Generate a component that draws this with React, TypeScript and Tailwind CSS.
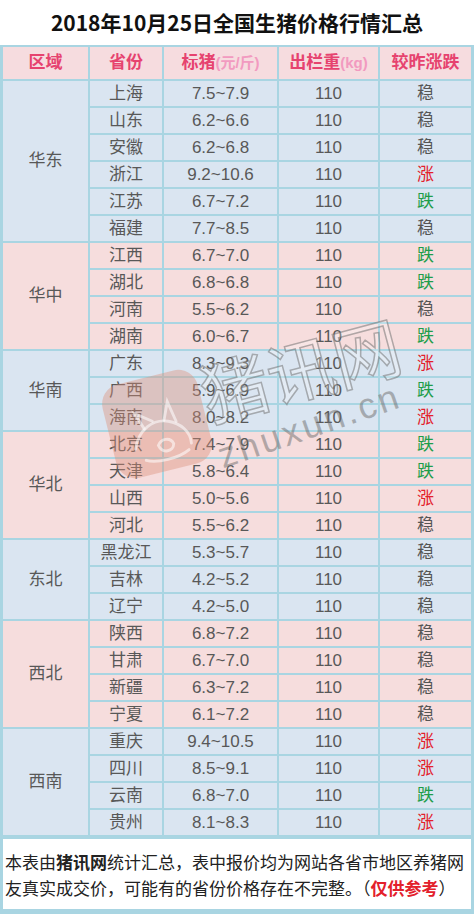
import React from 'react';

type Trend = '稳' | '涨' | '跌';
type Row = [string, string, Trend];
type Region = { name: string; tone: 'blue' | 'pink'; rows: Row[] };

const regions: Region[] = [
  {
    name: '华东',
    tone: 'blue',
    rows: [
      ['上海', '7.5~7.9', '稳'],
      ['山东', '6.2~6.6', '稳'],
      ['安徽', '6.2~6.8', '稳'],
      ['浙江', '9.2~10.6', '涨'],
      ['江苏', '6.7~7.2', '跌'],
      ['福建', '7.7~8.5', '稳'],
    ],
  },
  {
    name: '华中',
    tone: 'pink',
    rows: [
      ['江西', '6.7~7.0', '跌'],
      ['湖北', '6.8~6.8', '跌'],
      ['河南', '5.5~6.2', '稳'],
      ['湖南', '6.0~6.7', '跌'],
    ],
  },
  {
    name: '华南',
    tone: 'blue',
    rows: [
      ['广东', '8.3~9.3', '涨'],
      ['广西', '5.9~6.9', '跌'],
      ['海南', '8.0~8.2', '涨'],
    ],
  },
  {
    name: '华北',
    tone: 'pink',
    rows: [
      ['北京', '7.4~7.9', '跌'],
      ['天津', '5.8~6.4', '跌'],
      ['山西', '5.0~5.6', '涨'],
      ['河北', '5.5~6.2', '稳'],
    ],
  },
  {
    name: '东北',
    tone: 'blue',
    rows: [
      ['黑龙江', '5.3~5.7', '稳'],
      ['吉林', '4.2~5.2', '稳'],
      ['辽宁', '4.2~5.0', '稳'],
    ],
  },
  {
    name: '西北',
    tone: 'pink',
    rows: [
      ['陕西', '6.8~7.2', '稳'],
      ['甘肃', '6.7~7.0', '稳'],
      ['新疆', '6.3~7.2', '稳'],
      ['宁夏', '6.1~7.2', '稳'],
    ],
  },
  {
    name: '西南',
    tone: 'blue',
    rows: [
      ['重庆', '9.4~10.5', '涨'],
      ['四川', '8.5~9.1', '涨'],
      ['云南', '6.8~7.0', '跌'],
      ['贵州', '8.1~8.3', '涨'],
    ],
  },
];

const spanClass: Record<number, string> = {
  3: 'row-span-3',
  4: 'row-span-4',
  6: 'row-span-6',
};

const trendColor: Record<Trend, string> = {
  稳: 'text-[#555555]',
  涨: 'text-[#e3202b]',
  跌: 'text-[#1f9d4a]',
};

// faint site watermark lying over the middle of the table
function Watermark() {
  return (
    <div className="pointer-events-none absolute inset-0 overflow-hidden">
      <div className="absolute left-[108px] top-[376px] h-[96px] w-[98px] -rotate-[14deg] rounded-[20px] bg-[#dc8e78]/40">
        <svg viewBox="0 0 100 100" className="h-full w-full" fill="none" stroke="#ffffff" strokeOpacity="0.55" strokeWidth="3" strokeLinecap="round">
          <path d="M22 70 C30 50 48 44 62 50 C74 55 82 66 80 78" />
          <path d="M36 52 L30 34 L46 46" />
          <path d="M58 48 L66 30 L70 52" />
          <path d="M46 72 C50 66 60 66 62 74 C60 82 48 82 46 72 Z" />
          <path d="M30 84 C40 90 64 90 76 84" />
        </svg>
      </div>
      <div
        className="absolute left-[198px] top-[334px] -rotate-[15deg] text-[68px] font-normal leading-none text-[#ffffff]/25 [-webkit-text-stroke:1.5px_rgba(105,105,105,0.5)]"
        style={{ fontFamily: '"Noto Sans CJK SC", sans-serif' }}
      >
        猪讯网
      </div>
      <div
        className="absolute left-[214px] top-[408px] -rotate-[19deg] text-[36px] leading-none tracking-[3px] text-[#6e6e6e]/50"
        style={{ fontFamily: '"Liberation Sans", sans-serif' }}
      >
        zhuxun.cn
      </div>
    </div>
  );
}

export default function App() {
  return (
    <div
      className="relative h-[914px] w-[474px] overflow-hidden bg-white"
      style={{ fontFamily: '"Liberation Sans", "Noto Sans CJK SC", sans-serif' }}
    >
      <div
        className="flex h-[45px] items-center justify-center text-[21px] font-bold text-[#111111]"
        style={{ fontFamily: '"Noto Sans CJK SC", sans-serif' }}
      >
        2018年10月25日全国生猪价格行情汇总
      </div>

      <div className="grid grid-cols-[85px_72px_113px_99px_91px] grid-rows-[32px] auto-rows-[25px] gap-[2px] bg-[#a9d5e2] px-[3px] py-[2px] text-[17px] text-[#585858]">
        <div className="flex items-center justify-center bg-[#f6dcdf] font-bold text-[#e6436f]">区域</div>
        <div className="flex items-center justify-center bg-[#f6dcdf] font-bold text-[#e6436f]">省份</div>
        <div className="flex items-center justify-center bg-[#f6dcdf] font-bold text-[#e6436f]">
          标猪<span className="text-[15px] text-[#f29ac0]">(元/斤)</span>
        </div>
        <div className="flex items-center justify-center bg-[#f6dcdf] font-bold text-[#e6436f]">
          出栏重<span className="text-[15px] text-[#f29ac0]">(kg)</span>
        </div>
        <div className="flex items-center justify-center bg-[#f6dcdf] font-bold text-[#e6436f]">较昨涨跌</div>

        {regions.map((region) => {
          const bg = region.tone === 'blue' ? 'bg-[#dae5f1]' : 'bg-[#f6dddd]';
          return (
            <React.Fragment key={region.name}>
              <div className={`${spanClass[region.rows.length]} ${bg} flex items-center justify-center`}>
                {region.name}
              </div>
              {region.rows.map(([prov, price, trend]) => (
                <React.Fragment key={prov}>
                  <div className={`${bg} flex items-center justify-center`}>{prov}</div>
                  <div className={`${bg} flex items-center justify-center`}>{price}</div>
                  <div className={`${bg} flex items-center justify-center`}>110</div>
                  <div className={`${bg} flex items-center justify-center ${trendColor[trend]}`}>{trend}</div>
                </React.Fragment>
              ))}
            </React.Fragment>
          );
        })}
      </div>

      <div
        className="border-x-[3px] border-b-[5px] border-t-[2px] border-[#a9d5e2] bg-white px-[2px] pb-[8px] pt-[10px] text-[17px] leading-[26px] text-[#222222]"
        style={{ fontFamily: '"Noto Sans CJK SC", sans-serif' }}
      >
        <p>
          本表由<b>猪讯网</b>统计汇总，表中报价均为网站各省市地区养猪网
        </p>
        <p>
          友真实成交价，可能有的省份价格存在不完整。（<b className="text-[#e3202b]">仅供参考</b>）
        </p>
      </div>

      <Watermark />
    </div>
  );
}
